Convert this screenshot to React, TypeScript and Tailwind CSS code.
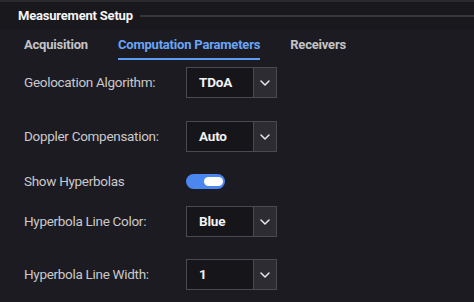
import React from "react";

function Chevron() {
  return (
    <svg width="10" height="6" viewBox="0 0 10 6" fill="none">
      <path d="M1 1l4 4 4-4" stroke="#e8e8ec" strokeWidth="1.5" strokeLinecap="round" strokeLinejoin="round" />
    </svg>
  );
}

function Select({ value }: { value: string }) {
  return (
    <div className="flex h-[31px] w-[91px] border border-[#4a4950] bg-[#16151a]">
      <div className="flex flex-1 items-center pl-[12px] text-[13.5px] font-bold tracking-[-0.2px] text-[#f2f2f4]">{value}</div>
      <div className="flex w-[23px] items-center justify-center border-l border-[#4a4950] bg-[#2d2c32]">
        <Chevron />
      </div>
    </div>
  );
}

function Row({ label, children, className }: { label: string; children: React.ReactNode; className: string }) {
  return (
    <div className={"flex items-center " + className}>
      <div className="w-[162px] text-[13.5px] tracking-[-0.3px] text-[#c9c9cd]">{label}</div>
      {children}
    </div>
  );
}

export default function App() {
  return (
    <div
      className="h-[302px] w-[474px] overflow-hidden bg-[#1c1b21] border-t-2 border-[#2a292e]"
      style={{ fontFamily: "Roboto, 'Liberation Sans', sans-serif" }}
    >
      <div className="flex h-[28px] items-center bg-[#19181d] pl-[18px]">
        <div className="text-[13px] font-bold tracking-[-0.2px] text-[#f4f4f6]">Measurement Setup</div>
        <div className="ml-[7px] h-[2px] flex-1 bg-[#37363c]" />
      </div>
      <div className="flex h-[30px] items-stretch gap-[30px] pl-[24px]">
        <div className="flex items-center text-[13px] font-bold tracking-[-0.2px] text-[#c4c4c8]">Acquisition</div>
        <div className="flex items-center border-b-2 border-[#5b9cf5] pt-[2px] text-[13px] font-bold tracking-[-0.2px] text-[#6aa5f7]">
          Computation Parameters
        </div>
        <div className="flex items-center text-[13px] font-bold tracking-[-0.2px] text-[#c4c4c8]">Receivers</div>
      </div>
      <div className="pl-[24px]">
        <Row label="Geolocation Algorithm:" className="mt-[7px]">
          <Select value="TDoA" />
        </Row>
        <Row label="Doppler Compensation:" className="mt-[23px]">
          <Select value="Auto" />
        </Row>
        <Row label="Show Hyperbolas" className="mt-[14px] h-[31px]">
          <div className="flex h-[15px] w-[39px] items-center justify-end rounded-full bg-[#4a87f0] pr-[2px]">
            <div className="h-[9px] w-[19px] rounded-full bg-white" />
          </div>
        </Row>
        <Row label="Hyperbola Line Color:" className="mt-[9px]">
          <Select value="Blue" />
        </Row>
        <Row label="Hyperbola Line Width:" className="mt-[22px]">
          <Select value="1" />
        </Row>
      </div>
    </div>
  );
}
